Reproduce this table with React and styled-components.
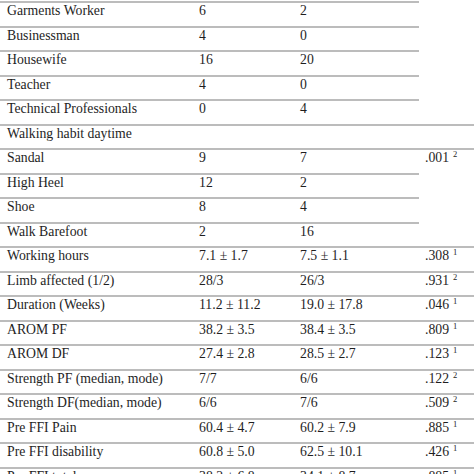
import React from 'react';
import styled, { createGlobalStyle } from 'styled-components';

const GlobalStyle = createGlobalStyle`
  html, body {
    margin: 0;
    padding: 0;
    background: #fff;
  }
  body {
    font-family: 'Liberation Serif', 'Times New Roman', serif;
    color: #1e1e1e;
  }
`;

const Table = styled.div`
  width: 474px;
  height: 474px;
  overflow: hidden;
  padding-top: 1px;
  box-sizing: border-box;
`;

const Row = styled.div`
  display: grid;
  grid-template-columns: 193px 101px 125px 55px;
  height: 24.5px;
`;

const Cell = styled.div`
  box-sizing: border-box;
  border-top: 2px solid ${(props) => (props.$noLine ? 'transparent' : '#bcbcbc')};
  padding-left: ${(props) => props.$pad || 6}px;
  font-size: 13.75px;
  line-height: 16px;
  white-space: nowrap;
`;

const Sup = styled.sup`
  font-size: 8.5px;
  vertical-align: 5px;
  line-height: 0;
  margin-left: 4px;
`;

// [label, group A, group B, p, footnote, p cell is part of a spanned block]
const rows = [
  ['Garments Worker', '6', '2', '', '', true],
  ['Businessman', '4', '0', '', '', true],
  ['Housewife', '16', '20', '', '', true],
  ['Teacher', '4', '0', '', '', true],
  ['Technical Professionals', '0', '4', '', '', true],
  ['Walking habit daytime', '', '', '', '', false],
  ['Sandal', '9', '7', '.001', '2', false],
  ['High Heel', '12', '2', '', '', true],
  ['Shoe', '8', '4', '', '', true],
  ['Walk Barefoot', '2', '16', '', '', true],
  ['Working hours', '7.1 ± 1.7', '7.5 ± 1.1', '.308', '1', false],
  ['Limb affected (1/2)', '28/3', '26/3', '.931', '2', false],
  ['Duration (Weeks)', '11.2 ± 11.2', '19.0 ± 17.8', '.046', '1', false],
  ['AROM PF', '38.2 ± 3.5', '38.4 ± 3.5', '.809', '1', false],
  ['AROM DF', '27.4 ± 2.8', '28.5 ± 2.7', '.123', '1', false],
  ['Strength PF (median, mode)', '7/7', '6/6', '.122', '2', false],
  ['Strength DF(median, mode)', '6/6', '7/6', '.509', '2', false],
  ['Pre FFI Pain', '60.4 ± 4.7', '60.2 ± 7.9', '.885', '1', false],
  ['Pre FFI disability', '60.8 ± 5.0', '62.5 ± 10.1', '.426', '1', false],
  ['Pre FFI total', '38.2 ± 6.8', '34.1 ± 8.7', '.885', '1', false],
];

const App = () => {
  return (
    <>
      <GlobalStyle />
      <Table>
        {rows.map(([label, a, b, p, note, spanned]) => (
          <Row key={label}>
            <Cell $pad={7}>{label}</Cell>
            <Cell>{a}</Cell>
            <Cell>{b}</Cell>
            <Cell $noLine={spanned}>
              {p}
              {note && <Sup>{note}</Sup>}
            </Cell>
          </Row>
        ))}
      </Table>
    </>
  );
};

export default App;
